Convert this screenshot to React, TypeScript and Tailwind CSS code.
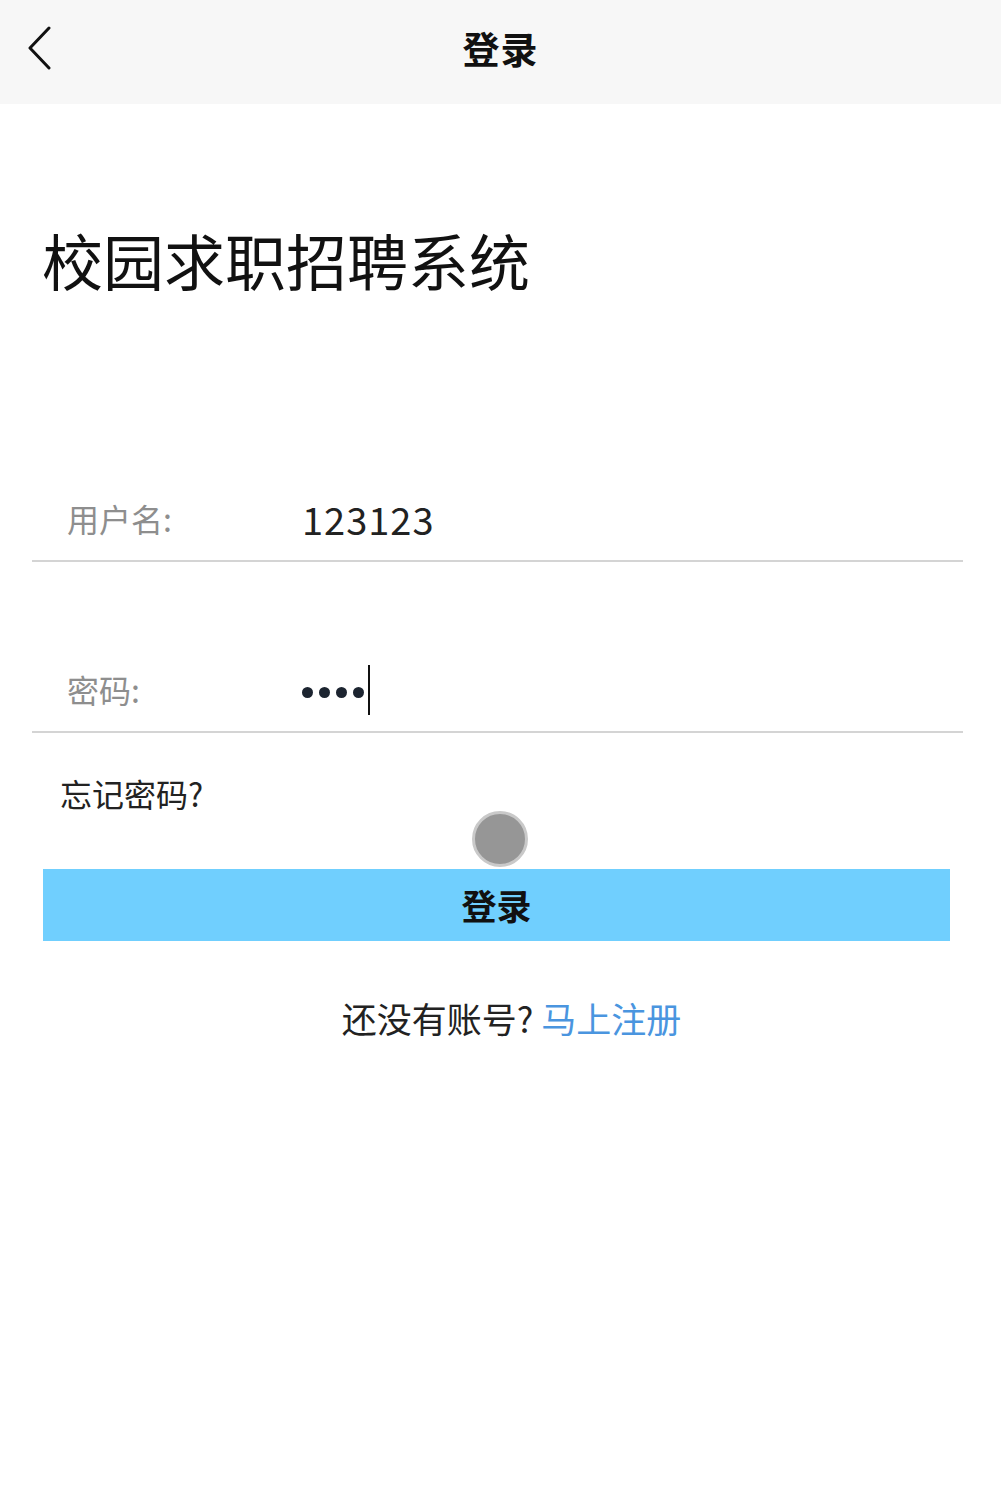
const font = { fontFamily: '"Microsoft YaHei", "Noto Sans CJK SC", "Noto Sans", sans-serif' }

function BackIcon() {
  return (
    <svg width="26" height="44" viewBox="0 0 26 44" fill="none">
      <path d="M23 2 L4 22 L23 42" stroke="#111" strokeWidth="3" strokeLinecap="round" strokeLinejoin="round" />
    </svg>
  )
}

export default function App() {
  return (
    <div className="min-h-[1496px] w-[1001px] bg-white" style={font}>
      <header className="relative flex h-[104px] items-center justify-center bg-[#f7f7f7] pb-[8px]">
        <button className="absolute left-[26px] top-[26px]" aria-label="back">
          <BackIcon />
        </button>
        <h1 className="text-[37px] font-semibold text-[#111] leading-none tracking-[1px]">登录</h1>
      </header>

      <div className="pl-[42px] pt-[120px] text-[61px] leading-[72px] text-[#111]">校园求职招聘系统</div>

      <div className="px-[32px] pt-[180px] pr-[38px]">
        <div className="flex h-[86px] items-center border-b-2 border-[#d4d4d4]">
          <span className="w-[270px] pl-[35px] text-[32px] text-[#8e8e8e]">用户名:</span>
          <span className="text-[38px] tracking-[1px] text-[#222]">123123</span>
        </div>

        <div className="mt-[85px] flex h-[86px] items-center border-b-2 border-[#d4d4d4]">
          <span className="w-[270px] pl-[35px] text-[32px] text-[#8e8e8e]">密码:</span>
          <div className="flex items-center">
            <div className="mt-[6px] flex gap-[6px]">
              <span className="h-[11px] w-[11px] rounded-full bg-[#1c2430]" />
              <span className="h-[11px] w-[11px] rounded-full bg-[#1c2430]" />
              <span className="h-[11px] w-[11px] rounded-full bg-[#1c2430]" />
              <span className="h-[11px] w-[11px] rounded-full bg-[#1c2430]" />
            </div>
            <span className="ml-[4px] mt-[2px] h-[50px] w-[2px] bg-[#111]" />
          </div>
        </div>

        <div className="pl-[28px] pt-[40px] text-[32px] leading-[40px] text-[#222]">忘记密码?</div>
      </div>

      <div className="relative mx-[43px] mt-[56px]">
        <span className="absolute left-[429px] top-[-58px] h-[56px] w-[56px] rounded-full border-[3px] border-[#c9c9c9] bg-[#969696]" />
        <button className="flex h-[72px] w-[907px] items-center justify-center bg-[#70cffe] text-[35px] font-semibold text-[#111]">
          登录
        </button>
      </div>

      <p className="mt-[55px] pl-[22px] text-center text-[35px] leading-[44px] text-[#222]">
        还没有账号? <span className="text-[#4a95df]">马上注册</span>
      </p>
    </div>
  )
}
